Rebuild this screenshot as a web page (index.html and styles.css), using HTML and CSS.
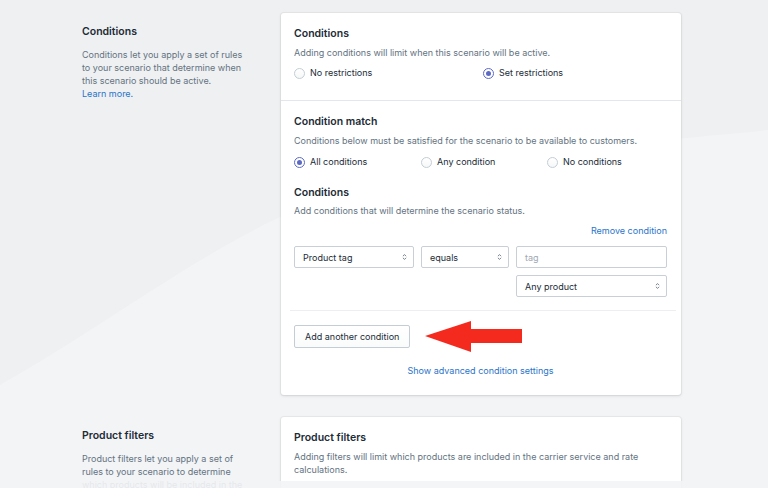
FILE: index.html
```html
<!DOCTYPE html>
<html lang="en">
<head>
<meta charset="utf-8">
<title>Scenario conditions</title>
<link rel="stylesheet" href="styles.css">
</head>
<body>
<main class="page">
  <section class="layout-section">
    <div class="annotation">
      <h2 class="annotation-title">Conditions</h2>
      <p class="annotation-text">Conditions let you apply a set of rules to your scenario that determine when this scenario should be active.<br><a class="link" href="#">Learn more.</a></p>
    </div>
    <div class="card">
      <div class="card-section">
        <h3 class="card-title">Conditions</h3>
        <p class="subtext">Adding conditions will limit when this scenario will be active.</p>
        <div class="radio-row two">
          <label class="radio"><span class="radio-dot"></span>No restrictions</label>
          <label class="radio"><span class="radio-dot checked"></span>Set restrictions</label>
        </div>
      </div>
      <div class="card-section second">
        <h3 class="card-title">Condition match</h3>
        <p class="subtext">Conditions below must be satisfied for the scenario to be available to customers.</p>
        <div class="radio-row three">
          <label class="radio"><span class="radio-dot checked"></span>All conditions</label>
          <label class="radio"><span class="radio-dot"></span>Any condition</label>
          <label class="radio"><span class="radio-dot"></span>No conditions</label>
        </div>

        <h3 class="card-title sub">Conditions</h3>
        <p class="subtext tight">Add conditions that will determine the scenario status.</p>
        <div class="remove-row"><a class="link" href="#">Remove condition</a></div>

        <div class="condition-grid">
          <div class="select">Product tag<svg class="caret" viewBox="0 0 6 10" width="5" height="8"><path d="M1 4 L3 2 L5 4 M1 6 L3 8 L5 6" fill="none" stroke="#637381" stroke-width="1.1"/></svg></div>
          <div class="select">equals<svg class="caret" viewBox="0 0 6 10" width="5" height="8"><path d="M1 4 L3 2 L5 4 M1 6 L3 8 L5 6" fill="none" stroke="#637381" stroke-width="1.1"/></svg></div>
          <div class="input">tag</div>
          <div class="select col3">Any product<svg class="caret" viewBox="0 0 6 10" width="5" height="8"><path d="M1 4 L3 2 L5 4 M1 6 L3 8 L5 6" fill="none" stroke="#637381" stroke-width="1.1"/></svg></div>
        </div>

        <hr class="divider">

        <div class="button-row">
          <button class="button" type="button">Add another condition</button>
          <svg class="arrow" viewBox="0 0 97 31" width="97" height="31"><path d="M0 15 L46 0 L46 8 L97 8 L97 22 L46 22 L46 31 Z" fill="#f52a1e"/></svg>
        </div>

        <div class="advanced"><a class="link" href="#">Show advanced condition settings</a></div>
      </div>
    </div>
  </section>

  <section class="layout-section">
    <div class="annotation">
      <h2 class="annotation-title">Product filters</h2>
      <p class="annotation-text">Product filters let you apply a set of rules to your scenario to determine which products will be included in the calculations.</p>
    </div>
    <div class="card">
      <div class="card-section">
        <h3 class="card-title">Product filters</h3>
        <p class="subtext">Adding filters will limit which products are included in the carrier service and rate calculations.</p>
      </div>
    </div>
  </section>
</main>
<div class="bottom-fade"></div>
</body>
</html>
```
FILE: styles.css
```css
html, body {
  margin: 0;
  padding: 0;
}
body {
  width: 768px;
  height: 488px;
  overflow: hidden;
  font-family: Inter, "Noto Sans", sans-serif;
  color: #212b36;
  background-color: #eff0f2;
  background-image: url("data:image/svg+xml;utf8,<svg xmlns='http://www.w3.org/2000/svg' width='768' height='488'><path d='M0 385 C150 300 260 200 420 170 C560 145 680 140 768 130 L768 488 L0 488 Z' fill='%23f3f4f6'/></svg>");
  background-repeat: no-repeat;
}
.page {
  padding: 13px 0 0 82px;
}
.layout-section {
  display: grid;
  grid-template-columns: 199px 400px;
  margin-bottom: 22px;
}
.annotation {
  padding-top: 12px;
}
.annotation-title {
  margin: 0;
  font-size: 10.5px;
  line-height: 14px;
  font-weight: 600;
  color: #212b36;
}
.annotation-text {
  margin: 9px 0 0;
  width: 165px;
  font-size: 9px;
  line-height: 13px;
  color: #637381;
}
.link {
  color: #2a74c9;
  text-decoration: none;
}
.card {
  background: #fff;
  border-radius: 3px;
  box-shadow: 0 0 0 1px rgba(63,63,68,0.05), 0 1px 3px rgba(63,63,68,0.15);
}
.card-section {
  padding: 14px 14px 20px 13px;
}
.card-section.second {
  border-top: 1px solid #e3e6ea;
  padding-bottom: 18px;
}
.card-title {
  margin: 0;
  font-size: 10.5px;
  line-height: 14px;
  font-weight: 600;
  color: #212b36;
}
.card-title.sub {
  margin-top: 17px;
}
.subtext {
  margin: 5px 0 0;
  font-size: 9px;
  line-height: 13px;
  color: #637381;
}
.subtext.tight {
  margin-top: 4px;
}
.radio-row {
  display: grid;
  margin-top: 7px;
  font-size: 9px;
  line-height: 14px;
  color: #212b36;
}
.radio-row.two {
  grid-template-columns: 189px 1fr;
}
.radio-row.three {
  grid-template-columns: 127px 126px 1fr;
  margin-top: 8px;
}
.radio {
  display: flex;
  align-items: center;
  gap: 5px;
}
.radio-dot {
  box-sizing: border-box;
  width: 11px;
  height: 11px;
  border-radius: 50%;
  border: 1px solid #c4cdd5;
  background: linear-gradient(#fff, #f6f7f8);
  display: flex;
  align-items: center;
  justify-content: center;
}
.radio-dot.checked {
  border-color: #5c6ac4;
  background: #fff;
}
.radio-dot.checked::after {
  content: "";
  width: 5px;
  height: 5px;
  border-radius: 50%;
  background: #5c6ac4;
}
.remove-row {
  margin-top: 7px;
  text-align: right;
  font-size: 9px;
  line-height: 13px;
}
.condition-grid {
  display: grid;
  grid-template-columns: 120px 88px 151px;
  gap: 7px;
  margin-top: 9px;
}
.select, .input {
  box-sizing: border-box;
  height: 22px;
  border: 1px solid #c9cfd6;
  border-radius: 2px;
  padding: 0 6px 0 8px;
  display: flex;
  align-items: center;
  justify-content: space-between;
  font-size: 9px;
  color: #212b36;
  background: #fff;
}
.input {
  color: #a0a8b2;
}
.select.col3 {
  grid-column: 3;
}
.caret {
  flex: none;
}
.divider {
  border: 0;
  border-top: 1px solid #eceef1;
  margin: 13px -9px 0 -4px;
}
.button-row {
  display: flex;
  align-items: center;
  margin-top: 14px;
}
.button {
  box-sizing: border-box;
  height: 23px;
  padding: 0 10px;
  border: 1px solid #c4cdd5;
  border-radius: 2px;
  background: linear-gradient(#fff, #fafbfb);
  font-family: inherit;
  font-size: 9px;
  color: #212b36;
}
.arrow {
  margin: -4px 0 -4px 15px;
}
.advanced {
  margin-top: 16px;
  text-align: center;
  font-size: 9px;
  line-height: 13px;
}
.bottom-fade {
  position: fixed;
  left: 0;
  right: 0;
  bottom: 0;
  height: 7px;
  background: rgba(243,244,246,0.9);
}
```
